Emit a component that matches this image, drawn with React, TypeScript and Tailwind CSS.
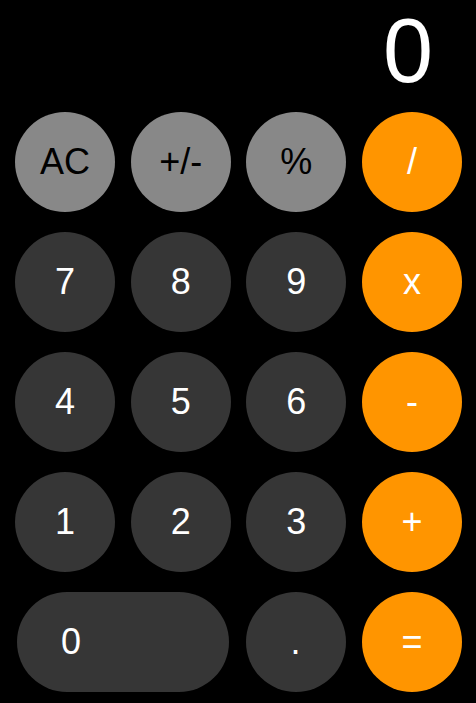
import { useState } from "react";

type Kind = "fn" | "num" | "op";

interface Key {
  label: string;
  kind: Kind;
  wide?: boolean;
}

const rows: Key[][] = [
  [
    { label: "AC", kind: "fn" },
    { label: "+/-", kind: "fn" },
    { label: "%", kind: "fn" },
    { label: "/", kind: "op" },
  ],
  [
    { label: "7", kind: "num" },
    { label: "8", kind: "num" },
    { label: "9", kind: "num" },
    { label: "x", kind: "op" },
  ],
  [
    { label: "4", kind: "num" },
    { label: "5", kind: "num" },
    { label: "6", kind: "num" },
    { label: "-", kind: "op" },
  ],
  [
    { label: "1", kind: "num" },
    { label: "2", kind: "num" },
    { label: "3", kind: "num" },
    { label: "+", kind: "op" },
  ],
  [
    { label: "0", kind: "num", wide: true },
    { label: ".", kind: "num" },
    { label: "=", kind: "op" },
  ],
];

const kindClass: Record<Kind, string> = {
  fn: "bg-[#888888] text-black",
  num: "bg-[#363636] text-white",
  op: "bg-[#ff9500] text-white",
};

function CalcButton({ k, onPress }: { k: Key; onPress: (label: string) => void }) {
  if (k.wide) {
    return (
      <button
        onClick={() => onPress(k.label)}
        className={`ml-[2px] flex h-[100px] w-[212px] items-center rounded-full pl-[44px] text-[36px] ${kindClass[k.kind]}`}
      >
        {k.label}
      </button>
    );
  }
  return (
    <button
      onClick={() => onPress(k.label)}
      className={`flex h-[100px] w-[100px] items-center justify-center rounded-full text-[36px] ${kindClass[k.kind]}`}
    >
      {k.label}
    </button>
  );
}

export default function App() {
  const [display, setDisplay] = useState("0");

  const press = (label: string) => {
    if (label === "AC") setDisplay("0");
    else if (/[0-9]/.test(label)) setDisplay((d) => (d === "0" ? label : d + label));
  };

  return (
    <div
      className="flex h-[703px] w-[476px] flex-col bg-black"
      style={{ fontFamily: '"Liberation Sans", Arial, sans-serif' }}
    >
      {/* Display */}
      <div className="flex h-[112px] items-start justify-end pr-[43px] text-[90px] leading-[1.15] text-white">
        {display}
      </div>

      {/* Keypad */}
      <div className="flex flex-col gap-[20px] pl-[15px] pr-[14px]">
        {rows.map((row, i) => (
          <div key={i} className="flex justify-between">
            {row.map((k) => (
              <CalcButton key={k.label} k={k} onPress={press} />
            ))}
          </div>
        ))}
      </div>
    </div>
  );
}
